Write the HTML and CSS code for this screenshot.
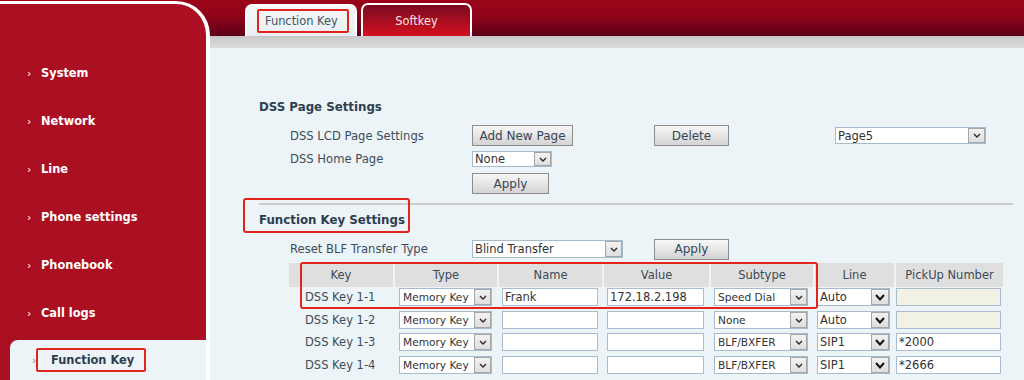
FILE: index.html
```html
<!DOCTYPE html>
<html lang="en">
<head>
  <meta charset="UTF-8" />
  <meta name="viewport" content="width=device-width, initial-scale=1.0"/>
  <title>Function Key</title>
  <link rel="stylesheet" href="styles.css">
</head>
<body>
  <div class="page">
    <aside class="sidebar">
      <nav class="nav">
        <a class="nav-item"><span class="caret">&rsaquo;</span>System</a>
        <a class="nav-item"><span class="caret">&rsaquo;</span>Network</a>
        <a class="nav-item"><span class="caret">&rsaquo;</span>Line</a>
        <a class="nav-item"><span class="caret">&rsaquo;</span>Phone settings</a>
        <a class="nav-item"><span class="caret">&rsaquo;</span>Phonebook</a>
        <a class="nav-item"><span class="caret">&rsaquo;</span>Call logs</a>
        <a class="nav-item active"><span class="caret">&rsaquo;</span><span class="mark mark-nav">Function Key</span></a>
      </nav>
    </aside>

    <main class="main">
      <div class="tabbar">
        <div class="tab tab-on"><span class="mark mark-tab">Function Key</span></div>
        <div class="tab tab-off">Softkey</div>
      </div>
      <div class="strip"></div>

      <div class="content">
        <div class="sec-title first">DSS Page Settings</div>

        <div class="form-row r1">
          <div class="label">DSS LCD Page Settings</div>
          <div><button class="btn btn-add">Add New Page</button></div>
          <div><button class="btn btn-del">Delete</button></div>
          <div>
            <div class="sel sel-page"><span class="sel-text">Page5</span><span class="sel-btn"><svg width="8" height="5" viewBox="0 0 8 5"><path d="M1 1 L4 4 L7 1" /></svg></span></div>
          </div>
        </div>
        <div class="form-row r2">
          <div class="label">DSS Home Page</div>
          <div>
            <div class="sel sel-home"><span class="sel-text">None</span><span class="sel-btn"><svg width="8" height="5" viewBox="0 0 8 5"><path d="M1 1 L4 4 L7 1" /></svg></span></div>
          </div>
        </div>
        <div class="form-row r3">
          <div></div>
          <div><button class="btn btn-apply">Apply</button></div>
        </div>

        <div class="divider"></div>

        <div class="sec-title second">Function Key Settings</div>

        <div class="form-row r4">
          <div class="label">Reset BLF Transfer Type</div>
          <div>
            <div class="sel sel-blf"><span class="sel-text">Blind Transfer</span><span class="sel-btn"><svg width="8" height="5" viewBox="0 0 8 5"><path d="M1 1 L4 4 L7 1" /></svg></span></div>
          </div>
          <div><button class="btn btn-del">Apply</button></div>
        </div>

        <div class="dss">
          <div class="dss-row dss-head">
            <div>Key</div><div>Type</div><div>Name</div><div>Value</div><div>Subtype</div><div>Line</div><div>PickUp Number</div>
          </div>

          <div class="dss-row h23">
            <div class="c-key">DSS Key 1-1</div>
            <div class="c-type"><div class="sel small w-type"><span class="sel-text">Memory Key</span><span class="sel-btn"><svg width="8" height="5" viewBox="0 0 8 5"><path d="M1 1 L4 4 L7 1" /></svg></span></div></div>
            <div class="c-name"><input class="fld w-name" value="Frank"></div>
            <div class="c-val"><input class="fld w-val" value="172.18.2.198"></div>
            <div class="c-sub"><div class="sel small w-sub"><span class="sel-text">Speed Dial</span><span class="sel-btn"><svg width="8" height="5" viewBox="0 0 8 5"><path d="M1 1 L4 4 L7 1" /></svg></span></div></div>
            <div class="c-line"><div class="sel w-line"><span class="sel-text">Auto</span><span class="sel-btn bold"><svg width="10" height="7" viewBox="0 0 10 7"><path d="M1 1 L5 5.5 L9 1" /></svg></span></div></div>
            <div class="c-pick"><input class="fld w-pick off" value=""></div>
          </div>

          <div class="dss-row h22">
            <div class="c-key">DSS Key 1-2</div>
            <div class="c-type"><div class="sel small w-type"><span class="sel-text">Memory Key</span><span class="sel-btn"><svg width="8" height="5" viewBox="0 0 8 5"><path d="M1 1 L4 4 L7 1" /></svg></span></div></div>
            <div class="c-name"><input class="fld w-name" value=""></div>
            <div class="c-val"><input class="fld w-val" value=""></div>
            <div class="c-sub"><div class="sel small w-sub"><span class="sel-text">None</span><span class="sel-btn"><svg width="8" height="5" viewBox="0 0 8 5"><path d="M1 1 L4 4 L7 1" /></svg></span></div></div>
            <div class="c-line"><div class="sel w-line"><span class="sel-text">Auto</span><span class="sel-btn bold"><svg width="10" height="7" viewBox="0 0 10 7"><path d="M1 1 L5 5.5 L9 1" /></svg></span></div></div>
            <div class="c-pick"><input class="fld w-pick off" value=""></div>
          </div>

          <div class="dss-row h23">
            <div class="c-key">DSS Key 1-3</div>
            <div class="c-type"><div class="sel small w-type"><span class="sel-text">Memory Key</span><span class="sel-btn"><svg width="8" height="5" viewBox="0 0 8 5"><path d="M1 1 L4 4 L7 1" /></svg></span></div></div>
            <div class="c-name"><input class="fld w-name" value=""></div>
            <div class="c-val"><input class="fld w-val" value=""></div>
            <div class="c-sub"><div class="sel small w-sub"><span class="sel-text">BLF/BXFER</span><span class="sel-btn"><svg width="8" height="5" viewBox="0 0 8 5"><path d="M1 1 L4 4 L7 1" /></svg></span></div></div>
            <div class="c-line"><div class="sel w-line"><span class="sel-text">SIP1</span><span class="sel-btn bold"><svg width="10" height="7" viewBox="0 0 10 7"><path d="M1 1 L5 5.5 L9 1" /></svg></span></div></div>
            <div class="c-pick"><input class="fld w-pick" value="*2000"></div>
          </div>

          <div class="dss-row h23">
            <div class="c-key">DSS Key 1-4</div>
            <div class="c-type"><div class="sel small w-type"><span class="sel-text">Memory Key</span><span class="sel-btn"><svg width="8" height="5" viewBox="0 0 8 5"><path d="M1 1 L4 4 L7 1" /></svg></span></div></div>
            <div class="c-name"><input class="fld w-name" value=""></div>
            <div class="c-val"><input class="fld w-val" value=""></div>
            <div class="c-sub"><div class="sel small w-sub"><span class="sel-text">BLF/BXFER</span><span class="sel-btn"><svg width="8" height="5" viewBox="0 0 8 5"><path d="M1 1 L4 4 L7 1" /></svg></span></div></div>
            <div class="c-line"><div class="sel w-line"><span class="sel-text">SIP1</span><span class="sel-btn bold"><svg width="10" height="7" viewBox="0 0 10 7"><path d="M1 1 L5 5.5 L9 1" /></svg></span></div></div>
            <div class="c-pick"><input class="fld w-pick" value="*2666"></div>
          </div>
        </div>

        <!-- red callouts drawn over the form -->
        <div class="callout callout-head"></div>
        <div class="callout callout-table"></div>
      </div>
    </main>
  </div>
</body>
</html>
```

FILE: styles.css
```css
body {
  margin: 0;
  font-family: "DejaVu Sans", Verdana, sans-serif;
  font-size: 11.5px;
  color: #3a4a5a;
  background: #edf4f7;
}

.page {
  display: flex;
  height: 380px;
  overflow: hidden;
  background: linear-gradient(#9b0519, #8e0418 16px, #60001a 35px, #60001a);
}

/* left menu */
.sidebar {
  width: 206px;
  flex-shrink: 0;
  margin-top: 1px;
  background: #ab1022;
  border-top: 3px solid #fff;
  border-right: 4px solid #fff;
  border-top-right-radius: 34px;
}

.nav {
  display: flex;
  flex-direction: column;
  padding-top: 45px;
}

.nav-item {
  display: flex;
  align-items: center;
  height: 48px;
  padding-left: 27px;
  color: #fff;
  font-weight: bold;
  font-size: 11.4px;
}

.caret {
  width: 14px;
  font-size: 11px;
  font-weight: normal;
}

.nav-item.active {
  margin-top: 3px;
  margin-left: 10px;
  height: 40px;
  padding-left: 22px;
  background: #edf4f7;
  border-top-left-radius: 8px;
  color: #2d3e50;
}

.nav-item.active .caret {
  width: 4px;
  color: #7a8792;
}

.mark {
  border: 2px solid #e5231d;
  border-radius: 2px;
}

.mark-nav {
  padding: 3px 10px 3px 13px;
  line-height: 14px;
}

/* tabs */
.main {
  flex: 1;
  display: flex;
  flex-direction: column;
}

.tabbar {
  height: 36px;
  display: flex;
  align-items: flex-end;
  gap: 4px;
  padding-left: 35px;
}

.tab {
  box-sizing: border-box;
  height: 32px;
  border: 2px solid #fff;
  border-bottom: none;
  border-radius: 7px 7px 0 0;
  display: flex;
  align-items: center;
}

.tab-on {
  width: 112px;
  background: linear-gradient(#f4f7f9, #e9eff3);
  padding-left: 10px;
  color: #435362;
  font-size: 11.4px;
}

.mark-tab {
  padding: 3px 9px 3px 6px;
  line-height: 14px;
}

.tab-off {
  width: 111px;
  height: 33px;
  justify-content: center;
  background: linear-gradient(#7a0b1f, #a80d20 50%, #d4101f);
  color: #f6e4e6;
  font-size: 11.4px;
}

.strip {
  height: 12px;
  background: linear-gradient(#c9c9c9, #dcdcdc);
}

/* form area */
.content {
  position: relative;
  flex: 1;
  background: #edf4f7;
  padding: 0 11px 0 49px;
}

.sec-title {
  height: 20px;
  line-height: 20px;
  font-weight: bold;
  font-size: 11.8px;
  color: #2d3e50;
}

.sec-title.first {
  margin-top: 49px;
}

.sec-title.second {
  margin-top: 5px;
}

.form-row {
  display: grid;
  grid-template-columns: 182px 182px 181px auto;
  align-items: center;
  padding-left: 31px;
}

.r1 { margin-top: 7px; height: 23px; }
.r2 { height: 24px; }
.r3 { height: 25px; }
.r4 { margin-top: 8px; height: 22px; }

.label {
  color: #3d4d5c;
  font-size: 11.6px;
}

.btn {
  display: block;
  box-sizing: border-box;
  height: 21px;
  padding: 0;
  border: 1px solid #8d8d8d;
  background: linear-gradient(#f7f7f7, #e6e6e6 50%, #d3d3d3);
  font-family: inherit;
  font-size: 12px;
  color: #364656;
}

.btn-add { width: 101px; }
.btn-del { width: 75px; }
.btn-apply { width: 77px; }

.divider {
  margin-top: 7px;
  height: 2px;
  background: #cbcbcb;
}

/* fake select boxes */
.sel {
  box-sizing: border-box;
  display: flex;
  align-items: stretch;
  height: 18px;
  border: 1px solid #a7bbcf;
  background: #fff;
  color: #333;
}

.sel-text {
  flex: 1;
  padding-left: 2px;
  line-height: 16px;
  white-space: nowrap;
  overflow: hidden;
}

.sel.small .sel-text {
  font-size: 10.6px;
  padding-left: 3px;
}

.sel-btn {
  width: 17px;
  box-sizing: border-box;
  border: 1px solid #a6a6a6;
  background: linear-gradient(#f2f2f2, #dedede);
  display: flex;
  align-items: center;
  justify-content: center;
}

.sel-btn path {
  fill: none;
  stroke: #2a2a2a;
  stroke-width: 1.4;
}

.sel-btn.bold {
  width: 18px;
}

.sel-btn.bold path {
  stroke: #111;
  stroke-width: 2;
}

.sel-page { width: 151px; height: 17px; }
.sel-home { width: 80px; height: 16px; }
.sel-home .sel-text { line-height: 14px; }
.sel-blf { width: 151px; }

/* DSS key table */
.dss {
  margin-top: 3px;
  margin-left: 30px;
  width: 714px;
}

.dss-row {
  display: grid;
  grid-template-columns: 104px 102px 103px 105px 102px 79px 107px;
  column-gap: 2px;
}

.dss-head {
  height: 24px;
}

.dss-head div {
  background: #dfdfdf;
  text-align: center;
  line-height: 24px;
  color: #3b4a58;
}

.h23 { height: 23px; }
.h22 { height: 22px; }

.dss-row > div {
  padding-top: 1px;
}

.dss-head > div {
  padding-top: 0;
}

.c-key { padding-left: 16px; line-height: 18px; color: #3d4d5c; }
.c-type { padding-left: 4px; }
.c-name { padding-left: 3px; }
.c-val { padding-left: 3px; }
.c-sub { padding-left: 3px; }
.c-line { padding-left: 2px; }

.fld {
  display: block;
  box-sizing: border-box;
  height: 18px;
  margin: 0;
  padding: 0 2px;
  border: 1px solid #a9bdd0;
  background: #fff;
  font-family: inherit;
  font-size: 11.5px;
  color: #333;
}

.fld.off { background: #f2f1e6; }

.w-type { width: 93px; }
.w-name { width: 96px; }
.w-val { width: 97px; }
.w-sub { width: 94px; }
.w-line { width: 73px; }
.w-pick { width: 105px; }

.callout {
  position: absolute;
  border: 2px solid #e5231d;
  border-radius: 3px;
  pointer-events: none;
}

.callout-head {
  left: 33px;
  top: 150px;
  width: 163px;
  height: 31px;
}

.callout-table {
  left: 90px;
  top: 214px;
  width: 514px;
  height: 43px;
}
```
